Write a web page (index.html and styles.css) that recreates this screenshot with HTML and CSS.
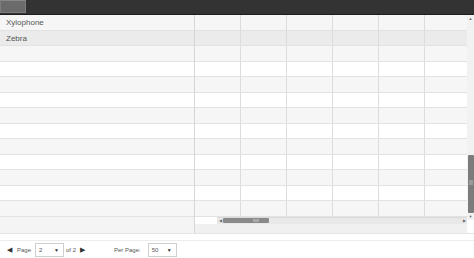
FILE: index.html
```html
<!DOCTYPE html>
<html>
<head>
<meta charset="utf-8">
<link rel="stylesheet" href="styles.css">
</head>
<body>
<div class="grid">
  <div class="header"><div class="hdr-box"></div></div>
  <div class="body">
    <div class="frozen">
      <div class="row alt"><span class="cell-text">Xylophone</span></div>
      <div class="row sel"><span class="cell-text">Zebra</span></div>
      <div class="row alt"></div><div class="row"></div>
      <div class="row alt"></div><div class="row"></div>
      <div class="row alt"></div><div class="row"></div>
      <div class="row alt"></div><div class="row"></div>
      <div class="row alt"></div><div class="row"></div>
      <div class="row alt"></div>
      <div class="filler"></div>
    </div>
    <div class="scrollpane">
      <div class="rows">
        <div class="row alt"><i></i><i></i><i></i><i></i><i></i><i></i></div>
        <div class="row sel"><i></i><i></i><i></i><i></i><i></i><i></i></div>
        <div class="row alt"><i></i><i></i><i></i><i></i><i></i><i></i></div>
        <div class="row"><i></i><i></i><i></i><i></i><i></i><i></i></div>
        <div class="row alt"><i></i><i></i><i></i><i></i><i></i><i></i></div>
        <div class="row"><i></i><i></i><i></i><i></i><i></i><i></i></div>
        <div class="row alt"><i></i><i></i><i></i><i></i><i></i><i></i></div>
        <div class="row"><i></i><i></i><i></i><i></i><i></i><i></i></div>
        <div class="row alt"><i></i><i></i><i></i><i></i><i></i><i></i></div>
        <div class="row"><i></i><i></i><i></i><i></i><i></i><i></i></div>
        <div class="row alt"><i></i><i></i><i></i><i></i><i></i><i></i></div>
        <div class="row"><i></i><i></i><i></i><i></i><i></i><i></i></div>
        <div class="row alt"><i></i><i></i><i></i><i></i><i></i><i></i></div>
      </div>
      <div class="hscroll">
        <span class="arr">&#9664;</span>
        <div class="hthumb"><span class="grip"></span></div>
        <div class="htrack"></div>
        <span class="arr">&#9654;</span>
      </div>
      <div class="hfill"></div>
    </div>
    <div class="vscroll">
      <span class="varr">&#9650;</span>
      <div class="vtrack"></div>
      <div class="vthumb"><span class="vgrip"></span></div>
      <span class="varr">&#9660;</span>
      <div class="vcorner"></div>
    </div>
  </div>
</div>
<div class="pager">
  <span class="tri">&#9664;</span>
  <span class="lbl l-page">Page</span>
  <span class="sel-box s-page"><span>2</span><span class="dd">&#9660;</span></span>
  <span class="lbl l-of">of 2</span>
  <span class="tri t-next">&#9654;</span>
  <span class="lbl l-per">Per Page:</span>
  <span class="sel-box s-per"><span>50</span><span class="dd">&#9660;</span></span>
</div>
</body>
</html>
```
FILE: styles.css
```css
* { box-sizing: border-box; }
html, body { margin: 0; padding: 0; background: #fff; }
body { width: 474px; height: 258px; overflow: hidden; font-family: "Liberation Sans", Arial, sans-serif; }

.grid { width: 474px; height: 234px; border-bottom: 1px solid #e4e4e4; display: flex; flex-direction: column; }
.header { height: 15px; background: #333; border-bottom: 1px solid #1e1e1e; flex: none; }
.hdr-box { width: 26px; height: 13px; background: #6b6b6b; border: 1px solid #7d7d7d; border-top-color: #888; }

.body { flex: 1; display: flex; min-height: 0; }
.frozen { width: 195px; border-right: 1px solid #d6d6d6; display: flex; flex-direction: column; flex: none; }
.row { height: 15.5px; background: #fff; border-bottom: 1px solid #e2e2e2; display: flex; align-items: center; flex: none; }
.row.alt { background: #f6f6f6; }
.row.sel { background: #ebebeb; }
.cell-text { font-size: 8px; color: #555; padding-left: 6px; padding-top: 1px; }
.filler { flex: 1; background: #f4f4f4; }

.scrollpane { flex: 1; display: flex; flex-direction: column; min-width: 0; }
.rows { display: flex; flex-direction: column; }
.rows .row i { width: 46px; height: 100%; border-right: 1px solid #dcdcdc; flex: none; }
.rows .row i:last-child { flex: 1; border-right: none; }
.hscroll { height: 7px; background: #e8e8e8; display: flex; align-items: center; border-top: 1px solid #dadada; margin-left: 22px; }
.arr { font-size: 4px; color: #666; width: 6px; text-align: center; line-height: 6px; }
.hthumb { width: 46px; height: 5px; background: #8a8a8a; border-radius: 1px; position: relative; }
.grip { position: absolute; left: 30px; top: 1px; width: 6px; height: 3px; background: #aaa; }
.htrack { flex: 1; }
.hfill { flex: 1; background: #f0f0f0; }

.vscroll { width: 7px; display: flex; flex-direction: column; align-items: center; background: #f2f2f2; flex: none; }
.varr { font-size: 4px; color: #666; height: 7px; line-height: 7px; }
.vtrack { height: 133px; }
.vthumb { width: 6px; height: 58px; background: #7c7c7c; border-radius: 1px; position: relative; }
.vgrip { position: absolute; left: 1px; top: 25px; width: 4px; height: 5px; background: #9a9a9a; }
.vcorner { flex: 1; width: 7px; background: #fff; }

.pager { height: 18px; margin-top: 6px; border-top: 1px solid #ececec; display: flex; align-items: center; padding-left: 7px; font-size: 6px; color: #555; }
.tri { font-size: 7px; color: #333; line-height: 8px; }
.l-page { margin-left: 5px; }
.s-page { margin-left: 4px; }
.l-of { margin-left: 2px; }
.t-next { margin-left: 4px; }
.l-per { margin-left: 29px; }
.s-per { margin-left: 7px; }
.sel-box { width: 29px; height: 14px; border: 1px solid #cfcfcf; background: #fff; display: flex; align-items: center; justify-content: space-between; padding: 0 4px 0 3px; }
.dd { font-size: 5px; color: #333; }
```
